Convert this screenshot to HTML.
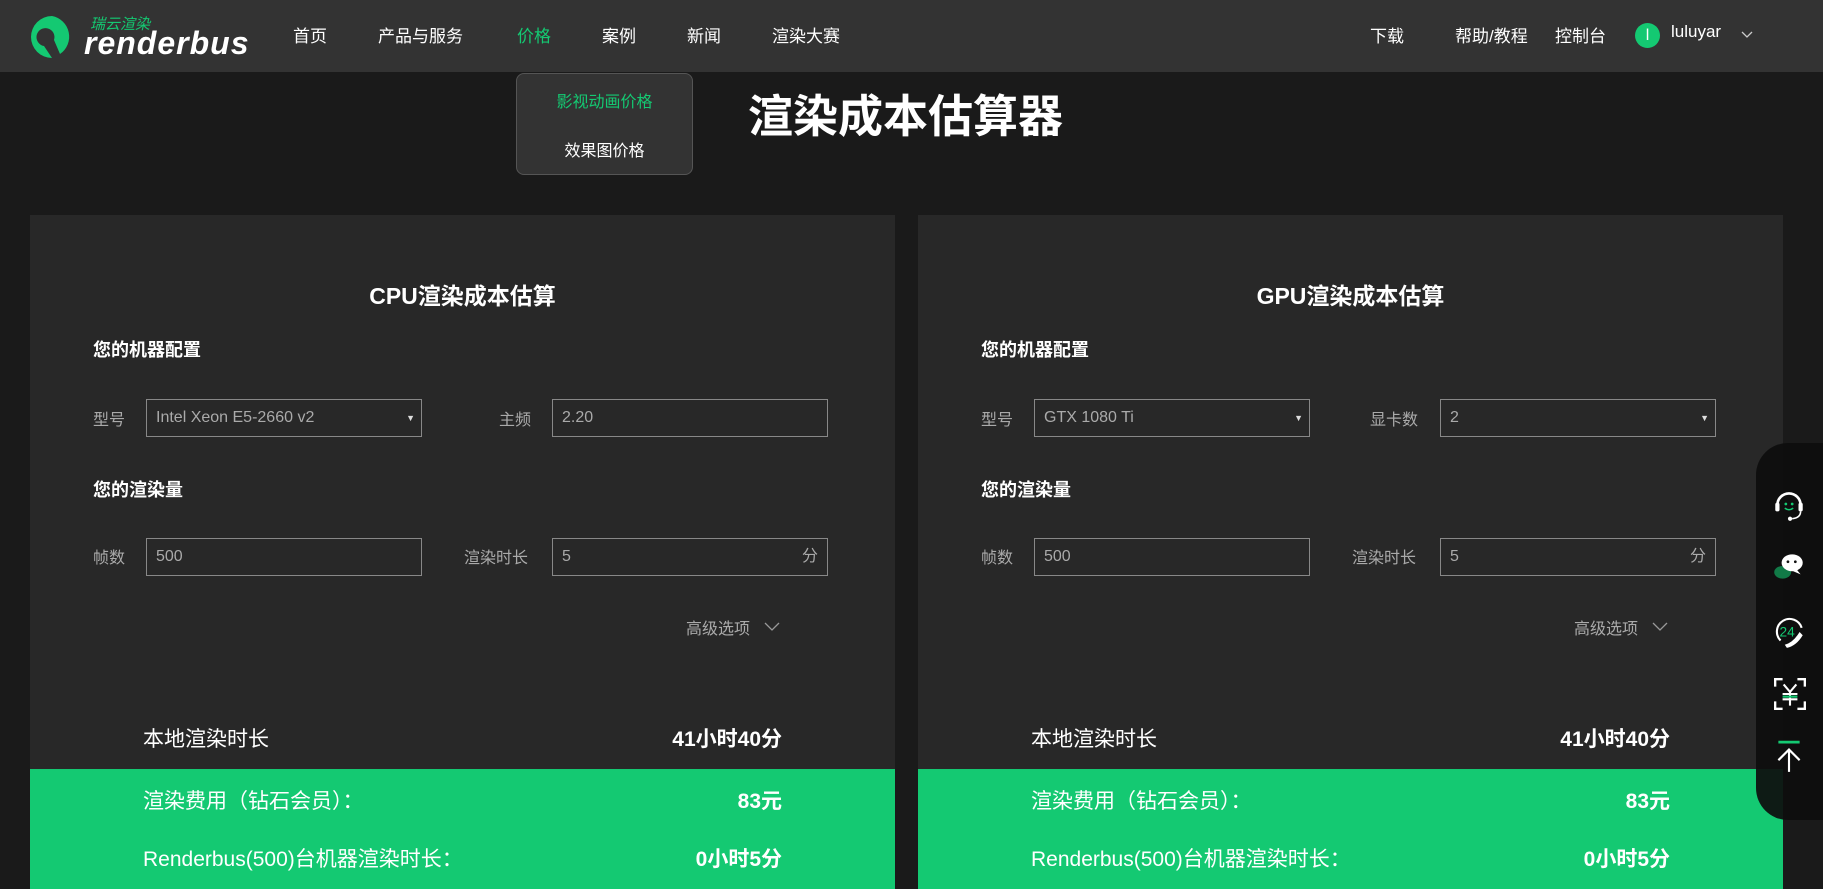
<!DOCTYPE html>
<html><head><meta charset="utf-8"><style>
*{margin:0;padding:0;box-sizing:border-box}
body{width:1823px;height:882px;overflow:hidden;background:#1a1a1a;font-family:"Liberation Sans","Noto Sans CJK SC",sans-serif;color:#fff;position:relative}
.a{position:absolute;white-space:nowrap}
.hdr{position:absolute;left:0;top:0;width:1823px;height:72px;background:#333}
.nav{font-size:17px;top:22px}
.card{position:absolute;top:215px;width:865px;height:667px;background:#282828}
.card .t{position:absolute;left:0;width:100%;text-align:center;font-size:23px;font-weight:bold}
.sec{font-size:18px;font-weight:bold}
.lbl{font-size:16px;color:#aaa}
.box{position:absolute;height:38px;border:1px solid #888;font-size:16px;color:#aaa;padding:0 9px;line-height:36px}
.green{position:absolute;left:0;top:554px;width:100%;height:120px;background:#14c972}
.big{font-size:21px}
</style></head><body>
<div class="hdr"></div>
<svg class="a" style="left:30px;top:14px" width="50" height="48" viewBox="0 0 50 48"><path d="M22 2a21 21 0 1 0 0 42l-8-12a9 9 0 1 1 10-6l6 14A21 21 0 0 0 22 2z" fill="#14c972"/></svg>
<div class="a" style="left:90px;top:13px;font-size:15px;color:#14c972;font-style:italic">瑞云渲染</div>
<div class="a" style="left:84px;top:25px;font-size:32px;font-weight:bold;font-style:italic;color:#fff;letter-spacing:1px">renderbus</div>
<div class="a nav" style="left:293px">首页</div>
<div class="a nav" style="left:378px">产品与服务</div>
<div class="a nav" style="left:517px;color:#14c972">价格</div>
<div class="a nav" style="left:602px">案例</div>
<div class="a nav" style="left:687px">新闻</div>
<div class="a nav" style="left:772px">渲染大赛</div>
<div class="a nav" style="left:1370px">下载</div>
<div class="a nav" style="left:1455px">帮助/教程</div>
<div class="a nav" style="left:1555px">控制台</div>
<div class="a" style="left:1635px;top:23px;width:25px;height:25px;border-radius:50%;background:#14c972;text-align:center;font-size:16px;line-height:25px">l</div>
<div class="a nav" style="left:1671px">luluyar</div>
<svg class="a" style="left:1741px;top:31px" width="12" height="8"><path d="M1 1l5 5 5-5" stroke="#ccc" fill="none" stroke-width="1.3"/></svg>
<div class="a" style="left:516px;top:73px;width:177px;height:102px;background:#333;border:1px solid #555;border-radius:8px">
<div class="a" style="left:0;width:100%;text-align:center;top:14px;font-size:16px;color:#14c972">影视动画价格</div>
<div class="a" style="left:0;width:100%;text-align:center;top:63px;font-size:16px">效果图价格</div></div>
<div class="a" style="left:748px;top:80px;font-size:45px;font-weight:bold">渲染成本估算器</div>

<div class="card" style="left:30px">
<div class="t" style="top:62px">CPU渲染成本估算</div>
<div class="a sec" style="left:63px;top:121px">您的机器配置</div>
<div class="a lbl" style="left:63px;top:191px">型号</div>
<div class="box" style="left:116px;top:184px;width:276px">Intel Xeon E5-2660 v2<span style="position:absolute;right:6px;font-size:9px;color:#ddd">▼</span></div>
<div class="a lbl" style="left:469px;top:191px">主频</div>
<div class="box" style="left:522px;top:184px;width:276px">2.20</div>
<div class="a sec" style="left:63px;top:261px">您的渲染量</div>
<div class="a lbl" style="left:63px;top:329px">帧数</div>
<div class="box" style="left:116px;top:323px;width:276px">500</div>
<div class="a lbl" style="left:434px;top:329px">渲染时长</div>
<div class="box" style="left:522px;top:323px;width:276px">5<span style="position:absolute;right:9px">分</span></div>
<div class="a lbl" style="left:656px;top:400px">高级选项</div>
<svg class="a" style="left:734px;top:407px" width="16" height="10"><path d="M1 1l7 7 7-7" stroke="#999" fill="none" stroke-width="1.3"/></svg>
<div class="a big" style="left:113px;top:508px">本地渲染时长</div>
<div class="a big" style="right:113px;top:508px;font-weight:bold">41小时40分</div>
<div class="green">
<div class="a big" style="left:113px;top:16px">渲染费用（钻石会员）：</div>
<div class="a big" style="right:113px;top:16px;font-weight:bold">83元</div>
<div class="a big" style="left:113px;top:74px">Renderbus(500)台机器渲染时长：</div>
<div class="a big" style="right:113px;top:74px;font-weight:bold">0小时5分</div></div>
</div>

<div class="card" style="left:918px">
<div class="t" style="top:62px">GPU渲染成本估算</div>
<div class="a sec" style="left:63px;top:121px">您的机器配置</div>
<div class="a lbl" style="left:63px;top:191px">型号</div>
<div class="box" style="left:116px;top:184px;width:276px">GTX 1080 Ti<span style="position:absolute;right:6px;font-size:9px;color:#ddd">▼</span></div>
<div class="a lbl" style="left:452px;top:191px">显卡数</div>
<div class="box" style="left:522px;top:184px;width:276px">2<span style="position:absolute;right:6px;font-size:9px;color:#ddd">▼</span></div>
<div class="a sec" style="left:63px;top:261px">您的渲染量</div>
<div class="a lbl" style="left:63px;top:329px">帧数</div>
<div class="box" style="left:116px;top:323px;width:276px">500</div>
<div class="a lbl" style="left:434px;top:329px">渲染时长</div>
<div class="box" style="left:522px;top:323px;width:276px">5<span style="position:absolute;right:9px">分</span></div>
<div class="a lbl" style="left:656px;top:400px">高级选项</div>
<svg class="a" style="left:734px;top:407px" width="16" height="10"><path d="M1 1l7 7 7-7" stroke="#999" fill="none" stroke-width="1.3"/></svg>
<div class="a big" style="left:113px;top:508px">本地渲染时长</div>
<div class="a big" style="right:113px;top:508px;font-weight:bold">41小时40分</div>
<div class="green">
<div class="a big" style="left:113px;top:16px">渲染费用（钻石会员）：</div>
<div class="a big" style="right:113px;top:16px;font-weight:bold">83元</div>
<div class="a big" style="left:113px;top:74px">Renderbus(500)台机器渲染时长：</div>
<div class="a big" style="right:113px;top:74px;font-weight:bold">0小时5分</div></div>
</div>

<div class="a" style="left:1756px;top:443px;width:67px;height:377px;background:rgba(14,14,14,0.93);border-radius:32px 0 0 32px"></div>
<svg class="a" style="left:1770px;top:486px" width="38" height="38" viewBox="0 0 36 36"><path d="M7 18a11 11 0 0 1 22 0" stroke="#fff" stroke-width="2.5" fill="none"/><rect x="5" y="16" width="4" height="8" rx="1.5" fill="#fff"/><rect x="27" y="16" width="4" height="8" rx="1.5" fill="#fff"/><circle cx="15" cy="17" r="1.3" fill="#14c972"/><circle cx="21" cy="17" r="1.3" fill="#14c972"/><path d="M14 21q4 3 8 0" stroke="#14c972" stroke-width="1.5" fill="none"/><path d="M29 24q0 6-8 7" stroke="#fff" stroke-width="1.5" fill="none"/><circle cx="19" cy="31" r="2" fill="#fff"/></svg>
<svg class="a" style="left:1770px;top:549px" width="38" height="36" viewBox="0 0 36 34"><ellipse cx="12" cy="22" rx="8" ry="6" fill="#117a47"/><ellipse cx="21" cy="13" rx="10" ry="8" fill="#fff"/><path d="M25 19l4 5-7-3z" fill="#fff"/><circle cx="17" cy="12" r="1.3" fill="#111"/><circle cx="24" cy="12" r="1.3" fill="#111"/></svg>
<svg class="a" style="left:1770px;top:613px" width="38" height="36" viewBox="0 0 36 34"><path d="M10 26a12 12 0 1 1 20-12" stroke="#fff" stroke-width="2" fill="none"/><text x="9" y="22" font-size="13" fill="#14c972" font-family="Liberation Sans">24</text><path d="M14 30q8-2 14-12l3 3q-6 10-15 12z" fill="#fff"/></svg>
<svg class="a" style="left:1772px;top:676px" width="36" height="36" viewBox="0 0 34 34"><path d="M3 10V3h7M24 3h7v7M31 24v7h-7M10 31H3v-7" stroke="#fff" stroke-width="2.2" fill="none"/><path d="M11 8l6 7 6-7M17 15v13M10 17h14M10 22h14" stroke="#fff" stroke-width="2" fill="none"/><path d="M10 19.5h14" stroke="#14c972" stroke-width="2"/></svg>
<svg class="a" style="left:1773px;top:740px" width="32" height="34" viewBox="0 0 30 32"><path d="M5 2h20" stroke="#14c972" stroke-width="2.5"/><path d="M15 30V9M5 19l10-10 10 10" stroke="#fff" stroke-width="2" fill="none"/></svg>
</body></html>
